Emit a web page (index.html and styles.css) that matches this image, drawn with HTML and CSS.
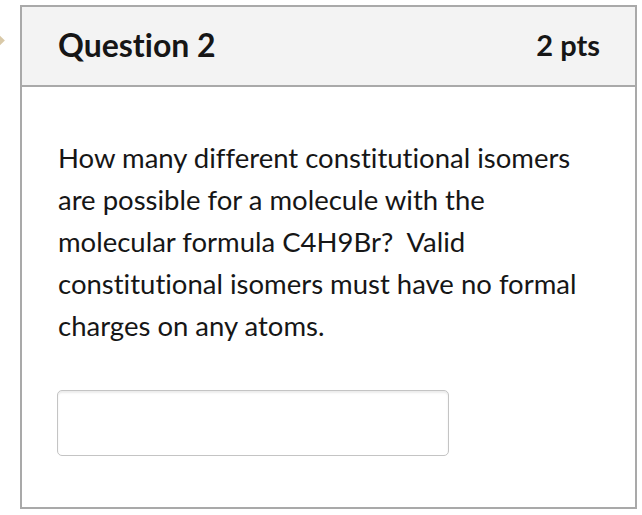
FILE: index.html
```html
<!DOCTYPE html>
<html>
<head>
<meta charset="utf-8">
<link rel="stylesheet" href="styles.css">
</head>
<body>
<div class="page">
  <div class="flag"></div>
  <div class="card">
    <div class="header">
      <span class="title">Question 2</span>
      <span class="pts">2 pts</span>
    </div>
    <div class="body">
      <p class="text">How many different constitutional isomers are possible for a molecule with the molecular formula C4H9Br?&nbsp; Valid constitutional isomers must have no formal charges on any atoms.</p>
      <input class="answer" type="text">
    </div>
  </div>
</div>
</body>
</html>
```
FILE: styles.css
```css
html, body {
  margin: 0;
  padding: 0;
  background: #ffffff;
}
.page {
  position: relative;
  padding: 5px 5px 6px 20px;
}
.flag {
  position: absolute;
  left: -6px;
  top: 36px;
  width: 9px;
  height: 9px;
  background: #d9c9a8;
  transform: rotate(45deg);
}
.card {
  border: 2px solid #a9a9a9;
  height: 504px;
  box-sizing: border-box;
  font-family: Lato, "Open Sans", sans-serif;
  font-variant-ligatures: no-common-ligatures;
  color: #161616;
}
.header {
  display: flex;
  justify-content: space-between;
  align-items: center;
  height: 78px;
  padding: 0 35px 0 36px;
  background: #f3f3f3;
  border-bottom: 2px solid #a9a9a9;
}
.title {
  font-weight: 700;
  font-size: 32px;
  padding-bottom: 4px;
}
.pts {
  font-weight: 700;
  font-size: 29px;
  padding-bottom: 4px;
}
.body {
  padding: 50px 36px 0 36px;
}
.text {
  margin: 0;
  font-size: 27.5px;
  line-height: 42px;
  width: 545px;
}
.answer {
  display: block;
  margin-top: 43px;
  width: 392px;
  height: 66px;
  box-sizing: border-box;
  margin-left: -1px;
  border: 1px solid #c4c4c4;
  border-radius: 5px;
  box-shadow: inset 0 2px 2px rgba(0,0,0,0.08);
  background: #fff;
}
```
